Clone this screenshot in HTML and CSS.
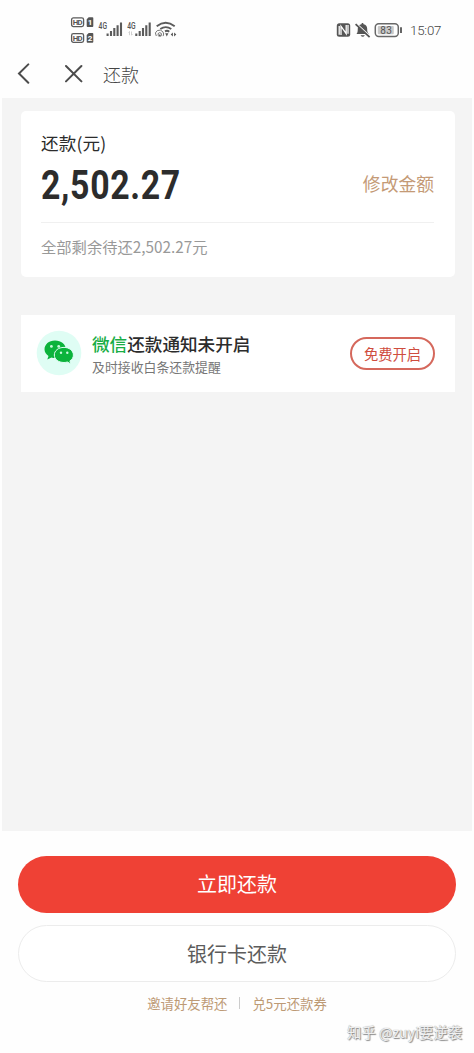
FILE: index.html
```html
<!DOCTYPE html>
<html lang="zh-CN">
<head>
<meta charset="utf-8">
<title>还款</title>
<link rel="stylesheet" href="styles.css">
</head>
<body>
<header class="status">
  <svg class="status-left" width="108" height="30" viewBox="0 0 108 30">
    <g class="hd">
      <rect x="1.6" y="2.9" width="12" height="8.7" rx="1.8"/>
      <rect x="1.6" y="18.6" width="12" height="8.7" rx="1.8"/>
      <text x="2.7" y="10.2" textLength="10">HD</text><text x="2.7" y="25.9" textLength="10">HD</text>
    </g>
    <path class="fill" d="M16.7 4.2l2-2h3.7q.9 0 .9.9v8q0 .9-.9.9h-4.8q-.9 0-.9-.9zM16.7 19.9l2-2h3.7q.9 0 .9.9v8q0 .9-.9.9h-4.8q-.9 0-.9-.9z"/>
    <text class="sim" x="17.8" y="10.2">1</text><text class="sim" x="17.8" y="25.9">2</text>
    <text class="net" x="28.6" y="14" textLength="8.4" lengthAdjust="spacingAndGlyphs">4G</text><text class="net" x="57.2" y="14" textLength="8.4" lengthAdjust="spacingAndGlyphs">4G</text>
    <path class="bars" d="M37.6 21v-2.4M41 21v-5M44.3 21v-8M47.6 21V10.3M51 21V7.6M66.3 21v-2.4M69.7 21v-5M73 21v-8M76.3 21V10.3M79.7 21V7.6"/>
    <path class="faint" d="M59.5 16.5v3.7M59.5 16.5l-1 1M61.5 16.5v3.7l1-1"/>
    <path class="wifi" d="M86.7 11.3q9-7 18 0M90.3 14q5.4-3.8 11 0M95 16.3q2.4-1.3 4.2.4"/>
    <path class="hotspot" d="M86.3 21q-2.3-3.5 1-5.4 3.4-1.6 5.6 1.2 1.5 2.2.2 4.3M88.3 20.8q-1.2-2.8 1.4-3.2 2.6.2 1.6 3.2"/>
    <path class="fill" d="M88.3 21.5l1.5-2.5 1.5 2.5zM95.2 18.3h3.2l-1.6 3.2zM102.9 17.6l-2.2 1.9 2.2 1.9zM104.1 17.6l2.2 1.9-2.2 1.9z"/>
  </svg>
  <div class="status-right">
    <svg width="67" height="18" viewBox="0 0 67 18">
      <rect class="fill" x=".8" y="2.2" width="13.4" height="13.6" rx="2.5"/>
      <path class="nfc" d="M5 14V5.2l5.2 7.4V4M3.2 5v8.8M12 4v8.8"/>
      <path class="fill" d="M20.5 13c1.4-1.6 1.2-3.3 1.3-5.5.1-2.4 1.3-3.8 3.6-4.2.2-1.8 2-1.8 2.2 0 2.4.5 3.5 2 3.6 4.4 0 2.2 0 3.7 1.6 5.3zM24.5 14.2h4.4q-2.2 3.2-4.4 0z"/>
      <path class="slash-gap" d="M20.6 2.8l13 12"/><path class="slash" d="M19.6 3.2l14 13"/>
      <rect class="battery" x="39.3" y="2.7" width="23" height="12.8" rx="3.4"/>
      <rect class="charge" x="41.8" y="5" width="16" height="8.2" rx="1"/>
      <path class="slash" d="M65 6.2v5.8"/>
      <text class="level" x="44.3" y="12.8" textLength="11.5">83</text>
    </svg>
    <time>15:07</time>
  </div>
</header>
<nav class="nav">
  <svg width="66" height="22" viewBox="0 0 66 22"><path d="M11.3 2.4L2 11.5l9.3 9.2M49 4l15.4 15.4M64.4 4L49 19.4"/></svg>
  <h1>还款</h1>
</nav>
<main class="content">
  <section class="bill">
    <div class="label">还款(元)</div>
    <div class="sum"><strong>2,502.27</strong><a>修改金额</a></div>
    <div class="remain">全部剩余待还<span>2,502.27</span>元</div>
  </section>
  <section class="notice">
    <svg class="wechat" width="46" height="46" viewBox="0 0 46 46">
      <circle class="halo" cx="23" cy="23" r="22.3"/>
      <path class="green" d="M19 10.5c-6.2 0-10.5 4-10.5 8.8 0 2.7 1.5 5.1 4 6.7l-1.2 3.6 4.2-2.2c1.2.4 2.2.6 3.5.6 6.2 0 10.8-4 10.8-8.8s-4.6-8.7-10.8-8.7z"/>
      <path class="green outline" d="M28 17.4c-5.6 0-9.7 3.3-9.7 7.6s4.1 7.5 9.7 7.5c1.2 0 2.3-.2 3.4-.5l3.5 2-1-3.1c2.2-1.3 3.5-3.4 3.5-5.9 0-4.2-4.1-7.6-9.4-7.6z"/>
      <g class="eye"><circle cx="15.4" cy="16.4" r="1.4"/><circle cx="22.7" cy="16.4" r="1.4"/><circle cx="25" cy="22.8" r="1.2"/><circle cx="31.3" cy="22.8" r="1.2"/></g>
    </svg>
    <div class="notice-text">
      <h2><span>微信</span>还款通知未开启</h2>
      <p>及时接收白条还款提醒</p>
    </div>
    <button class="enable">免费开启</button>
  </section>
</main>
<footer class="footer">
  <button class="pay">立即还款</button>
  <button class="pay bank">银行卡还款</button>
  <div class="links"><a>邀请好友帮还</a><i></i><a>兑5元还款券</a></div>
  <div class="mark">知乎 @zuyi要逆袭</div>
</footer>
</body>
</html>
```
FILE: styles.css
```css
* { box-sizing: border-box; }
body {
  margin: 0; width: 474px; height: 1053px; overflow: hidden;
  background: #fefefe; color: #2c2c2c;
  font-family: "Noto Sans CJK SC", sans-serif;
  display: flex; flex-direction: column;
}
h1, h2, p { margin: 0; font-weight: 400; }
button { font: inherit; padding: 0; background: none; white-space: nowrap; }
svg { display: block; flex: none; fill: none; }
.status { height: 50px; padding: 15px 33px 0 70px; display: flex; justify-content: space-between; }
.status text { font-family: Roboto, sans-serif; fill: #555; }
.status .fill { fill: #555; }
.hd rect { stroke: #5b5b5b; stroke-width: 1.3; }
.status .hd text { font-size: 7.8px; font-weight: 700; }
.status .sim { font-size: 8px; font-weight: 700; fill: #fff; }
.status .net { font-size: 9px; font-weight: 500; }
.bars { stroke: #5b5b5b; stroke-width: 2.1; }
.faint { stroke: #c4c4c4; stroke-width: .8; }
.wifi { stroke: #5b5b5b; stroke-width: 1.9; }
.hotspot { stroke: #777; stroke-width: 1; }
.status-right { display: flex; gap: 7px; padding-top: 6px; }
.nfc { stroke: #fff; stroke-width: 1.3; }
.slash { stroke: #555; stroke-width: 1.8; }
.slash-gap { stroke: #fff; stroke-width: 1.4; }
.battery { stroke: #686868; stroke-width: 1.5; }
.charge { fill: #c9c9c9; }
.status .level { font-size: 10px; }
.status time { font: 300 13.3px/19px Roboto, sans-serif; color: #444; width: 31px; letter-spacing: -.2px; white-space: nowrap; }
.nav { height: 48px; padding-left: 17px; display: flex; gap: 20px; }
.nav svg { margin-top: 12px; stroke: #4c4c4c; stroke-width: 2; stroke-linecap: round; }
.nav h1 { font-weight: 300; font-size: 18px; line-height: 48px; color: #444; }
.content { height: 733px; margin: 0 2px; padding: 13px 17px 0 19px; background: #f4f4f4; flex: none; }
.bill { height: 166px; padding: 19px 21px 0 20px; background: #fff; border-radius: 5px; }
.label { font-size: 17.6px; line-height: 26px; letter-spacing: .1px; }
.sum { height: 67px; display: flex; justify-content: space-between; border-bottom: 1px solid #f0f0f0; }
.sum strong { font: 700 40.5px/59px Roboto, sans-serif; letter-spacing: .8px; transform: scaleX(.835); transform-origin: left; }
.sum a { font-size: 17.8px; line-height: 55px; color: #c49a76; }
.remain { font-size: 15.3px; line-height: 47px; color: #999; }
.notice { margin-top: 38px; height: 77px; padding: 0 20px 0 15px; display: flex; align-items: center; background: #fff; }
.halo { fill: #dffdf4; }
.green { fill: #0cb33b; }
.outline { stroke: #dffdf4; stroke-width: 1; }
.eye { fill: #c9f8dc; }
.wechat { margin-bottom: 1px; }
.notice-text { margin: 0 0 1px 10px; flex: 1; }
.notice h2 { font-size: 17.6px; line-height: 26px; font-weight: 500; }
.notice h2 span { color: #18ad45; }
.notice p { font-size: 12.9px; line-height: 19px; color: #777; }
.enable { width: 85px; height: 33px; margin-bottom: 1px; border: 1.6px solid #cf4d3e; border-width: 2px; border-color: #d5685c; border-radius: 17px; font-size: 14.3px; line-height: 27px; color: #cf4d3e; }
.footer { flex: 1; padding: 25px 18px 0; }
.pay { display: block; width: 438px; height: 57px; border: 0; border-radius: 29px; background: #ef4135; color: #fff; font-size: 20px; line-height: 55px; padding-bottom: 2px; }
.bank { margin-top: 12px; background: #fff; border: 1px solid #ececec; color: #5c5c5c; }
.links { margin-top: 10px; display: flex; align-items: center; justify-content: center; gap: 12px; font-size: 13.4px; line-height: 22px; color: #bd9a75; }
.links i { width: 1px; height: 12px; background: #ccc; }
.mark { margin: 7px -6px 0 0; text-align: right; font-size: 14.3px; line-height: 22px; color: #f0f0f0; text-shadow: 0 0 1px #888, 1px 1px 1px #888; }
```
